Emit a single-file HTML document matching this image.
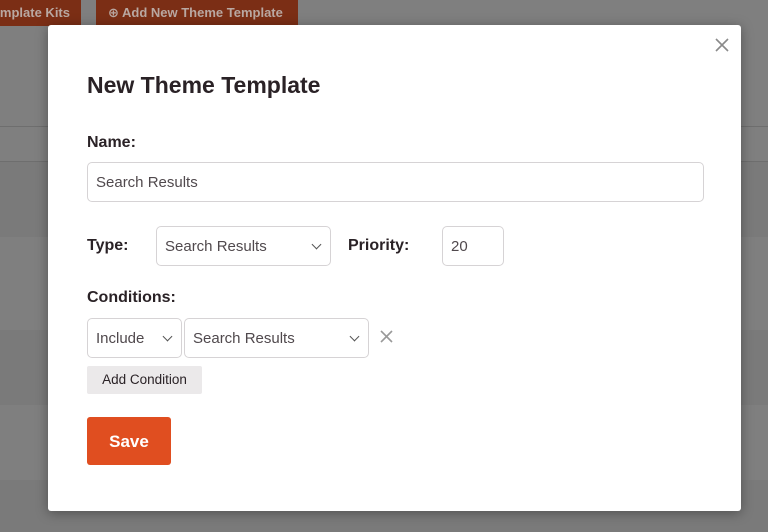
<!DOCTYPE html>
<html><head><style>
*{box-sizing:border-box}
body{margin:0;width:768px;height:532px;overflow:hidden;background:#7f7f7f;font-family:"Liberation Sans","DejaVu Sans",sans-serif;position:relative}
.band{position:absolute;left:0;width:768px}
.btn1{position:absolute;top:0;height:26px;background:#7b2e15;color:#b9a8a2;font-size:13px;font-weight:bold;line-height:26px;white-space:nowrap;overflow:hidden}
.modal{position:absolute;left:48px;top:25px;width:693px;height:486px;background:#fff;border-radius:3px;box-shadow:0 2px 12px rgba(0,0,0,.35)}
.t{position:absolute;color:#2a2226;font-weight:bold;line-height:20px}
.inp{position:absolute;border:1px solid #d6d3d5;border-radius:5px;background:#fff;color:#50494d;font-size:15px;line-height:40px;padding-left:8px;white-space:nowrap}
.chev{position:absolute;top:14px;width:7px;height:7px;border-right:1.5px solid #555;border-bottom:1.5px solid #555;transform:rotate(45deg)}
</style></head><body>
<div class="band" style="top:126px;height:1px;background:#6e6e6e"></div>
<div class="band" style="top:161px;height:1px;background:#6e6e6e"></div>
<div class="band" style="top:162px;height:75px;background:#7a7a7a"></div>
<div class="band" style="top:330px;height:75px;background:#7a7a7a"></div>
<div class="band" style="top:480px;height:52px;background:#7a7a7a"></div>
<div class="btn1" style="left:0;width:81px;text-align:right;padding-right:11px;direction:rtl">mplate Kits</div>
<div class="btn1" style="left:96px;width:202px;padding-left:12px">&#8853; Add New Theme Template</div>
<div class="modal">
 <svg style="position:absolute;right:12px;top:13px" width="14" height="14" viewBox="0 0 14 14"><path d="M1 1L13 13M13 1L1 13" stroke="#8a8a8a" stroke-width="1.6"/></svg>
 <div class="t" style="left:39px;top:47px;font-size:23px;line-height:26px">New Theme Template</div>
 <div class="t" style="left:39px;top:108px;font-size:16px">Name:</div>
 <div class="inp" style="left:39px;top:137px;width:617px;height:40px;line-height:39px">Search Results</div>
 <div class="t" style="left:39px;top:211px;font-size:16px">Type:</div>
 <div class="inp" style="left:108px;top:201px;width:175px;height:40px">Search Results<div class="chev" style="right:10px"></div></div>
 <div class="t" style="left:300px;top:211px;font-size:16px">Priority:</div>
 <div class="inp" style="left:394px;top:201px;width:62px;height:40px">20</div>
 <div class="t" style="left:39px;top:263px;font-size:16px">Conditions:</div>
 <div class="inp" style="left:39px;top:293px;width:95px;height:40px">Include<div class="chev" style="right:10px"></div></div>
 <div class="inp" style="left:136px;top:293px;width:185px;height:40px">Search Results<div class="chev" style="right:10px"></div></div>
 <svg style="position:absolute;left:332px;top:305px" width="13" height="13" viewBox="0 0 13 13"><path d="M1 1L12 12M12 1L1 12" stroke="#999" stroke-width="1.6"/></svg>
 <div style="position:absolute;left:39px;top:341px;width:115px;height:28px;background:#ebe9ea;border-radius:2px;font-size:13.5px;color:#2a2226;line-height:28px;text-align:center">Add Condition</div>
 <div style="position:absolute;left:39px;top:392px;width:84px;height:48px;background:#e04e20;border-radius:3px;color:#fff;font-size:17px;font-weight:bold;line-height:50px;text-align:center">Save</div>
</div>
</body></html>
